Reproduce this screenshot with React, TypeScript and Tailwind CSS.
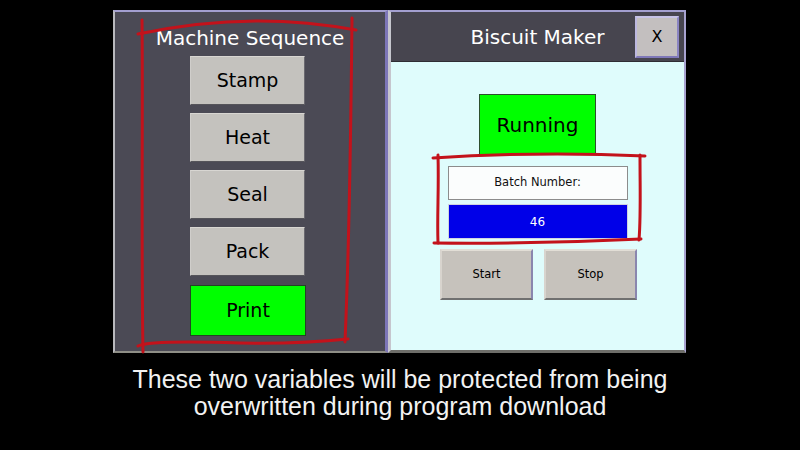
const hmi = { fontFamily: '"DejaVu Sans", Verdana, sans-serif' };

const sequence = ['Stamp', 'Heat', 'Seal', 'Pack'];

export default function App() {
  return (
    <div className="relative w-[800px] h-[450px] bg-black overflow-hidden" style={hmi}>
      <div className="pt-[10px]">
        <div className="ml-[113px] w-[573px] h-[343px] flex">
          {/* left panel */}
          <div className="w-[275px] h-full flex flex-col bg-[#4b4a55] border-l-2 border-t-2 border-b-2 border-r-[3px] border-l-[#b9b9bd] border-t-[#a39fd0] border-b-[#8e8e86] border-r-[#7d76b8]">
            <div className="pt-[13px] h-[44px] text-center text-white text-[20px] leading-[26px]">Machine Sequence</div>
            <div className="flex flex-col gap-[8px] pl-[75px]">
              {sequence.map(s => (
                <div
                  key={s}
                  className="w-[115px] h-[49px] flex items-center justify-center bg-[#c4c2be] border border-t-[#d8d6d2] border-l-[#d0cecb] border-b-[#55545a] border-r-[#6a6970] text-black text-[19px]"
                >
                  {s}
                </div>
              ))}
              <div className="w-[116px] h-[51px] mt-[1px] flex items-center justify-center bg-[#00ff00] border border-[#234423] text-black text-[19px]">
                Print
              </div>
            </div>
          </div>

          {/* right panel */}
          <div className="flex-1 h-full flex flex-col border-l-[3px] border-t-2 border-r-2 border-b-[3px] border-l-[#c6c6ce] border-t-[#a39fd0] border-r-[#a7a2cf] border-b-[#6e6e6a]">
            <div className="h-[50px] flex items-center bg-[#47454f] border-b border-[#2e2d33]">
              <div className="w-[49px]" />
              <div className="flex-1 text-center text-white text-[20px] leading-[26px]">Biscuit Maker</div>
              <div className="w-[44px] h-[42px] mr-[5px] flex items-center justify-center bg-[#c3bfbf] border-2 border-t-[#c6c2e6] border-l-[#bdb8e0] border-b-[#7f78b8] border-r-[#8a84c2] text-black text-[16px]">
                X
              </div>
            </div>
            <div className="flex-1 flex flex-col items-center bg-[#dffcfc] pt-[32px]">
              <div className="w-[117px] h-[61px] flex items-center justify-center bg-[#00ff00] border border-[#2d4f2d] text-black text-[20px]">
                Running
              </div>
              <div className="mt-[11px] w-[180px] h-[34px] flex items-center justify-center bg-[#fbfdfd] border border-[#8c8c8c] text-[#111] text-[11.5px]">
                Batch Number:
              </div>
              <div className="mt-[4px] w-[180px] h-[35px] flex items-center justify-center bg-[#0000e8] border border-[#cfd3e0] text-white text-[12px]">
                46
              </div>
              <div className="mt-[10px] ml-[2px] flex gap-[11px]">
                {['Start', 'Stop'].map(b => (
                  <div
                    key={b}
                    className="w-[93px] h-[51px] flex items-center justify-center bg-[#c6c2bc] border-2 border-t-[#e2ded6] border-l-[#d8d4ce] border-b-[#707070] border-r-[#8a86ae] text-black text-[11.5px]"
                  >
                    {b}
                  </div>
                ))}
              </div>
            </div>
          </div>
        </div>
      </div>

      <div
        className="mt-[13px] text-center text-[#f2f2f2] text-[25px] leading-[27px]"
        style={{ fontFamily: '"Liberation Sans", Arial, sans-serif' }}
      >
        These two variables will be protected from being
        <br />
        overwritten during program download
      </div>

      {/* hand-drawn annotations */}
      <svg className="absolute inset-0 pointer-events-none" width="800" height="450" viewBox="0 0 800 450">
        <g fill="none" stroke="#c3121b" strokeWidth="3" strokeLinecap="round">
          <path d="M142,20 C143,110 141,240 143,352" />
          <path d="M138,34 Q250,10 356,30" />
          <path d="M352,18 C351,120 349,250 345,342" />
          <path d="M138,346 Q150,340 240,343 Q300,344 348,339" />
          <path d="M433,158 Q540,151 645,156" />
          <path d="M438,155 C439,190 437,215 438,243" />
          <path d="M640,155 C640,190 641,215 639,240" />
          <path d="M434,243 Q540,244 641,239" />
        </g>
      </svg>
    </div>
  );
}
